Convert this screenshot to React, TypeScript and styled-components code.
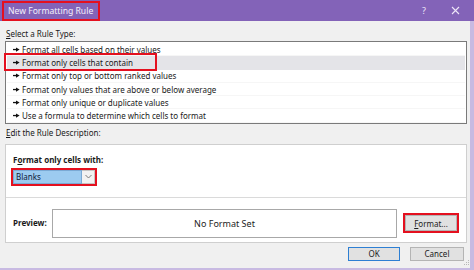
import React from "react";
import styled, { createGlobalStyle } from "styled-components";

const Global = createGlobalStyle`
  html, body { margin: 0; padding: 0; background: #f0f0f0; }
  * { box-sizing: border-box; }
`;

const FONT = `"Noto Sans", "Open Sans", Arial, sans-serif`;

const Window = styled.div`
  width: 474px;
  height: 270px;
  display: flex;
  flex-direction: column;
  font-family: ${FONT};
  font-size: 8px;
  color: #1a1a1a;
  overflow: hidden;
`;

const TitleBar = styled.div`
  height: 21px;
  flex: none;
  background: #8363b8;
  display: flex;
  align-items: flex-start;
  padding: 1px 0 0 2px;
`;

const TitleBox = styled.div`
  height: 20px;
  width: 98px;
  border: 2px solid #e4101f;
  display: flex;
  align-items: center;
  padding-left: 4px;
  color: #f4f0fb;
  font-size: 8.6px;
  white-space: nowrap;
`;

const TitleControls = styled.div`
  margin-left: auto;
  display: flex;
  align-items: center;
  height: 19px;
  color: #eee6f8;
  gap: 25px;
  padding-right: 14px;
`;

const HelpGlyph = styled.span`
  font-size: 9px;
`;

const Main = styled.div`
  position: relative;
  flex: 1;
  background: #f0f0f0;
  border-right: 4px solid #c8bae2;
  border-bottom: 2px solid #c8bae2;
  padding: 0 3px 0 5px;
  display: flex;
  flex-direction: column;
`;

const SectionLabel = styled.div<{ $top: number }>`
  margin-top: ${(p) => p.$top}px;
  height: 12px;
  line-height: 12px;
  padding-left: 1px;
  white-space: nowrap;
`;

const U = styled.span`
  text-decoration: underline;
  text-underline-offset: 1px;
`;

const ListBox = styled.div`
  margin-top: 1px;
  background: #ffffff;
  border: 1px solid #7a7a7a;
  padding: 1px 1px 0;
  display: flex;
  flex-direction: column;
`;

const Row = styled.div<{ $selected?: boolean }>`
  position: relative;
  height: 13.3px;
  display: flex;
  align-items: center;
  padding-left: 6px;
  gap: 2px;
  background: ${(p) => (p.$selected ? "#e4e4e8" : "transparent")};
  border-bottom: 1px solid ${(p) => (p.$selected ? "#e4e4e8" : "#f6f6f6")};
  white-space: nowrap;
`;

const RowMark = styled.div`
  position: absolute;
  left: -3px;
  top: -3px;
  width: 153px;
  height: 18px;
  border: 2px solid #e4101f;
  pointer-events: none;
`;

const Panel = styled.div`
  margin-top: 5px;
  background: #ffffff;
  border: 1px solid #cfcfcf;
  display: flex;
  flex-direction: column;
`;

const PanelTop = styled.div`
  padding: 9px 6px 11px;
  display: flex;
  flex-direction: column;
  align-items: flex-start;
`;

const BoldLabel = styled.div`
  font-weight: 700;
  height: 12px;
  line-height: 12px;
  padding-left: 1px;
  white-space: nowrap;
`;

const RedFrame = styled.div<{ $w: number; $h: number }>`
  width: ${(p) => p.$w}px;
  height: ${(p) => p.$h}px;
  border: 2px solid #e4101f;
  display: flex;
  flex: none;
`;

const Combo = styled.div`
  margin-top: 2px;
  margin-left: -1px;
`;

const ComboValue = styled.div`
  flex: 1;
  background: #9ccbf0;
  border: 1px solid #7aa9d4;
  display: flex;
  align-items: center;
  padding-left: 2px;
  color: #10203a;
`;

const ComboArrow = styled.div`
  width: 13px;
  background: #f2f2f2;
  border: 1px solid #c4c4c4;
  border-left: none;
  display: flex;
  align-items: center;
  justify-content: center;
`;

const PreviewRow = styled.div`
  border-top: 1px solid #dadada;
  padding: 11px 6px 4px 6px;
  display: flex;
  align-items: center;
`;

const PreviewLabel = styled(BoldLabel)`
  width: 40px;
`;

const PreviewBox = styled.div`
  width: 345px;
  height: 29px;
  border: 1px solid #a8a8a8;
  background: #ffffff;
  display: flex;
  align-items: center;
  justify-content: center;
  font-size: 9px;
  color: #222;
`;

const FormatFrame = styled(RedFrame)`
  margin-left: 6px;
`;

const Button = styled.div<{ $primary?: boolean }>`
  flex: 1;
  background: #e1e1e1;
  border: 1px solid ${(p) => (p.$primary ? "#2d7fd3" : "#b4b4b4")};
  display: flex;
  align-items: center;
  justify-content: center;
  color: #1a1a1a;
  white-space: nowrap;
`;

const ButtonRow = styled.div`
  margin-top: 4px;
  display: flex;
  justify-content: flex-end;
  gap: 10px;
  padding-right: 3px;
`;

const DialogButton = styled(Button)<{ $w: number }>`
  flex: none;
  width: ${(p) => p.$w}px;
  height: 14px;
`;

const Grip = styled.svg`
  position: absolute;
  right: 0px;
  bottom: 2px;
`;

const Arrow = () => (
  <svg width="7" height="5" viewBox="0 0 7 5">
    <rect x="0" y="1.9" width="3.6" height="1.3" fill="#111" />
    <polygon points="3,0.4 6.6,2.55 3,4.7" fill="#111" />
  </svg>
);

const rules = [
  "Format all cells based on their values",
  "Format only cells that contain",
  "Format only top or bottom ranked values",
  "Format only values that are above or below average",
  "Format only unique or duplicate values",
  "Use a formula to determine which cells to format",
];

export default function App() {
  return (
    <>
      <Global />
      <Window>
        <TitleBar>
          <TitleBox>New Formatting Rule</TitleBox>
          <TitleControls>
            <HelpGlyph>?</HelpGlyph>
            <svg width="9" height="9" viewBox="0 0 9 9">
              <path d="M1 1 L8 8 M8 1 L1 8" stroke="#eee6f8" strokeWidth="1.1" />
            </svg>
          </TitleControls>
        </TitleBar>
        <Main>
          <SectionLabel $top={7}>
            <U>S</U>elect a Rule Type:
          </SectionLabel>
          <ListBox>
            {rules.map((r, i) => (
              <Row key={r} $selected={i === 1}>
                <Arrow />
                <span>{r}</span>
                {i === 1 && <RowMark />}
              </Row>
            ))}
          </ListBox>
          <SectionLabel $top={3}>
            <U>E</U>dit the Rule Description:
          </SectionLabel>
          <Panel>
            <PanelTop>
              <BoldLabel>
                F<U>o</U>rmat only cells with:
              </BoldLabel>
              <Combo>
                <RedFrame $w={86} $h={18}>
                  <ComboValue>Blanks</ComboValue>
                  <ComboArrow>
                    <svg width="7" height="5" viewBox="0 0 7 5">
                      <path d="M0.5 1 L3.5 4 L6.5 1" stroke="#7a7a7a" strokeWidth="1" fill="none" />
                    </svg>
                  </ComboArrow>
                </RedFrame>
              </Combo>
            </PanelTop>
            <PreviewRow>
              <PreviewLabel>Preview:</PreviewLabel>
              <PreviewBox>No Format Set</PreviewBox>
              <FormatFrame $w={56} $h={20}>
                <Button>
                  <U>F</U>ormat...
                </Button>
              </FormatFrame>
            </PreviewRow>
          </Panel>
          <ButtonRow>
            <DialogButton $w={52} $primary>
              OK
            </DialogButton>
            <DialogButton $w={54}>Cancel</DialogButton>
          </ButtonRow>
          <Grip width="6" height="6" viewBox="0 0 6 6">
            <rect x="4" y="0" width="1" height="1" fill="#b8b8b8" />
            <rect x="2" y="2" width="1" height="1" fill="#b8b8b8" />
            <rect x="4" y="2" width="1" height="1" fill="#b8b8b8" />
            <rect x="0" y="4" width="1" height="1" fill="#b8b8b8" />
            <rect x="2" y="4" width="1" height="1" fill="#b8b8b8" />
            <rect x="4" y="4" width="1" height="1" fill="#b8b8b8" />
          </Grip>
        </Main>
      </Window>
    </>
  );
}
